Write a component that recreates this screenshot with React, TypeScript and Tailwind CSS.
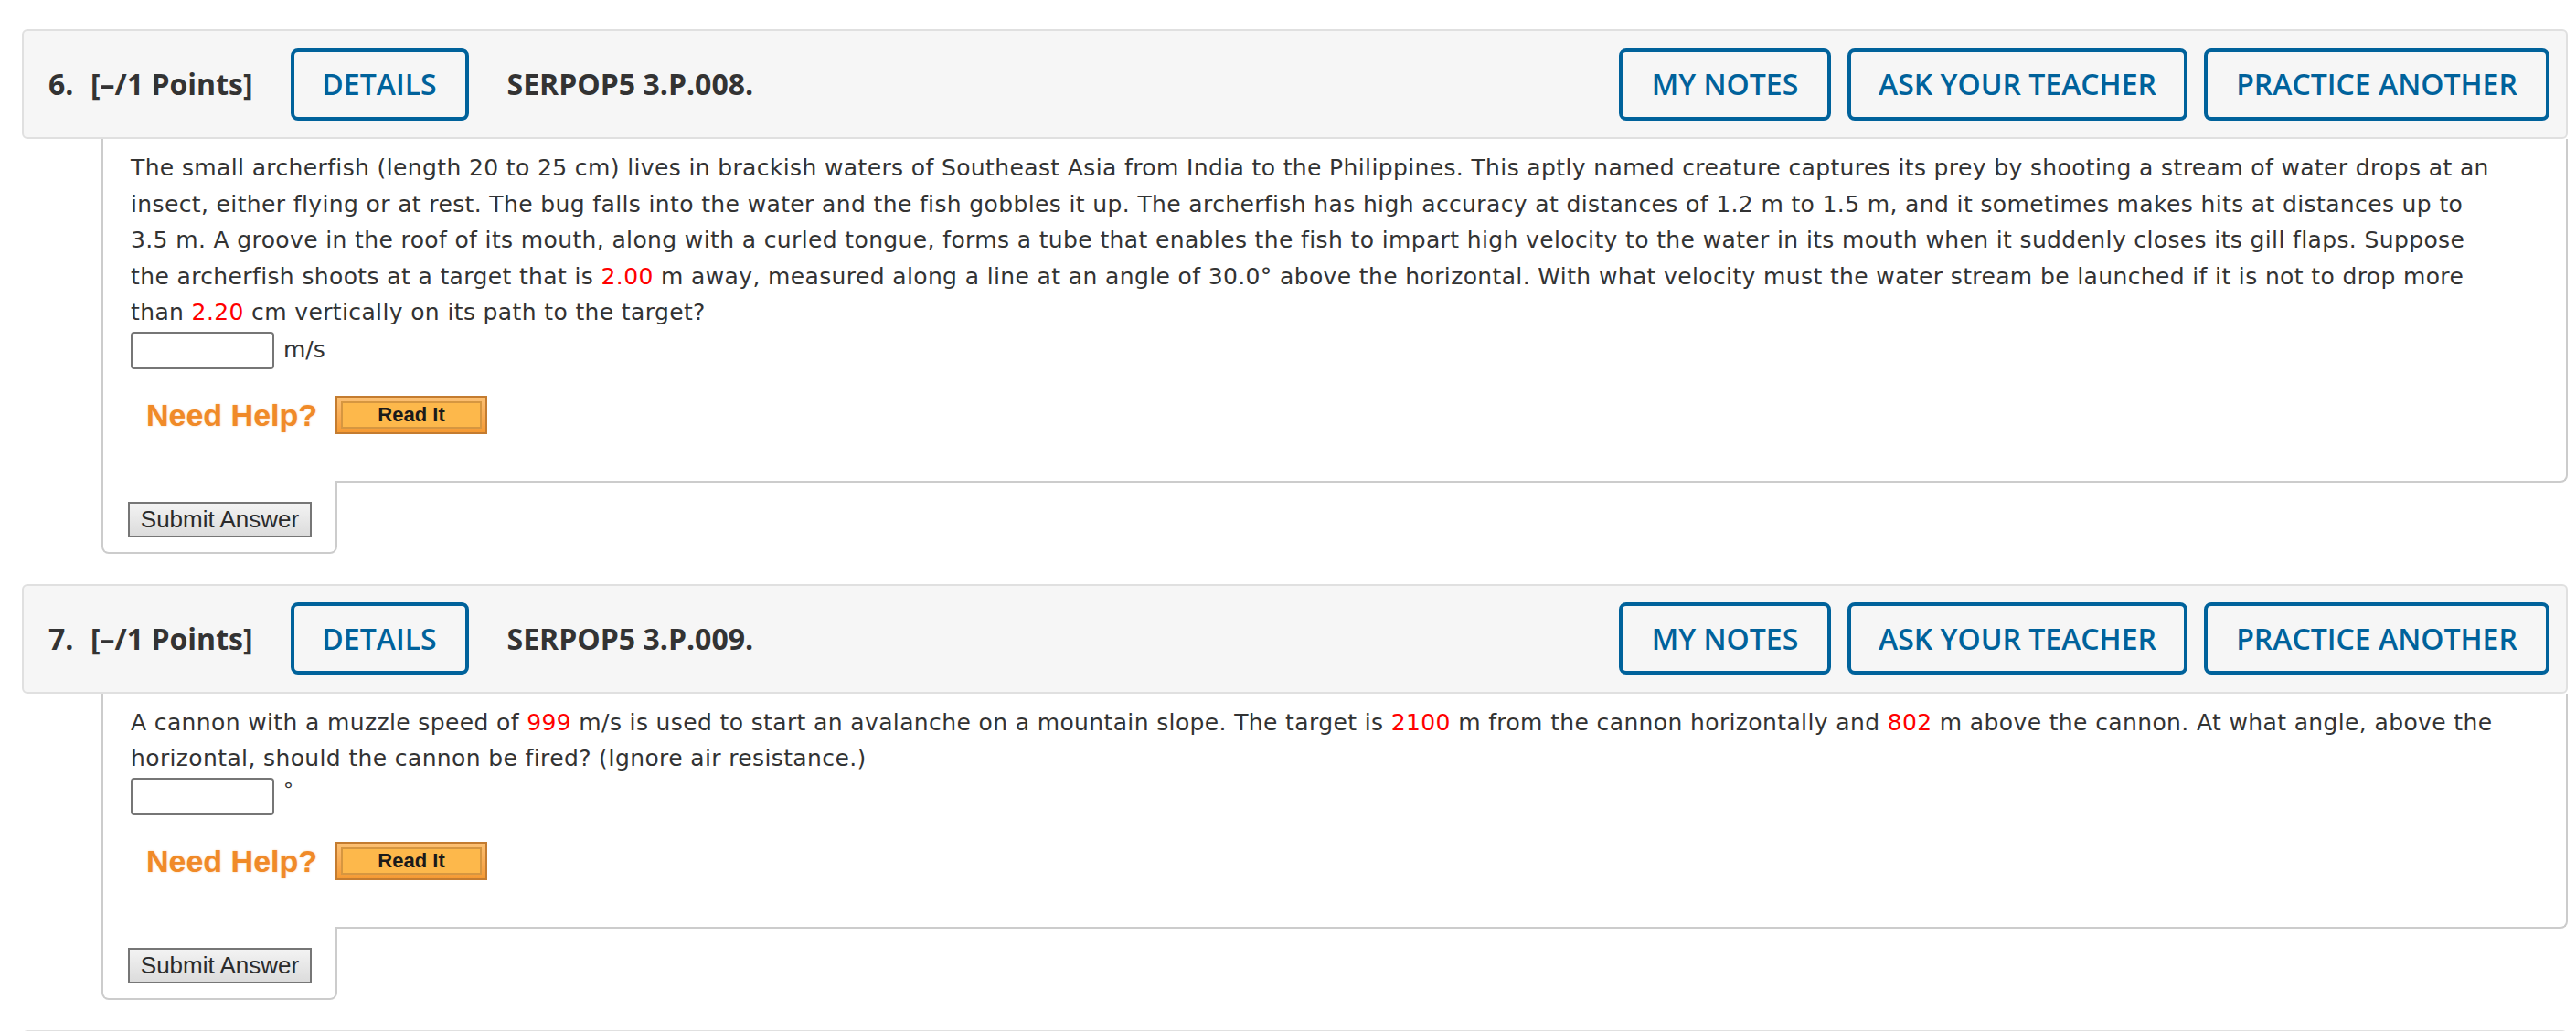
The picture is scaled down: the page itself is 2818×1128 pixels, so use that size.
import React from "react";

function HBtn({ label, cls }: { label: string; cls: string }) {
  return (
    <div
      className={
        "flex h-[79px] items-center justify-center rounded-[8px] border-[4px] border-[#00629b] bg-[#f6f6f6] font-['Open_Sans',sans-serif] text-[32px] font-semibold text-[#00629b] " +
        cls
      }
    >
      {label}
    </div>
  );
}

function Header({ num, code }: { num: string; code: string }) {
  return (
    <div className="flex h-[120px] items-center rounded-[6px] border-2 border-[#e0e0e0] bg-[#f6f6f6] pl-[27px] pr-[18px] font-['Open_Sans',sans-serif] text-[#333]">
      <span className="w-[46px] text-[32px] font-bold">{num}</span>
      <span className="text-[32px] font-bold">[–/1 Points]</span>
      <HBtn label="DETAILS" cls="ml-[41px] w-[195px]" />
      <span className="ml-[42px] text-[32px] font-bold">{code}</span>
      <div className="ml-auto flex gap-[18px]">
        <HBtn label="MY NOTES" cls="w-[232px]" />
        <HBtn label="ASK YOUR TEACHER" cls="w-[372px]" />
        <HBtn label="PRACTICE ANOTHER" cls="w-[378px]" />
      </div>
    </div>
  );
}

function Red({ children }: { children: React.ReactNode }) {
  return <span className="text-[#ff0000]">{children}</span>;
}

function NeedHelp() {
  return (
    <div className="ml-[17px] mt-[25px] flex items-center">
      <span
        className="font-['Liberation_Sans',Arial,sans-serif] text-[34px] font-bold text-[#f08a28]"
        style={{ textShadow: "0 0 2px rgba(240,138,40,0.45)" }}
      >
        Need Help?
      </span>
      <div className="ml-[20px] h-[42px] w-[166px] border-2 border-[#c47c30] bg-gradient-to-b from-[#fcc073] to-[#f59a32] p-[4px]">
        <div className="flex h-full w-full items-center justify-center border-2 border-[#d69640] bg-[#fdb84b] font-['Liberation_Sans',Arial,sans-serif] text-[22px] font-bold leading-none text-[#1a1a1a]">
          Read It
        </div>
      </div>
    </div>
  );
}

function Question({
  num,
  code,
  lines,
  unit,
  degree,
}: {
  num: string;
  code: string;
  lines: React.ReactNode[];
  unit: string;
  degree?: boolean;
}) {
  return (
    <div>
      <Header num={num} code={code} />
      <div className="ml-[87px] mr-0">
        <div className="rounded-br-[8px] border-x-2 border-b-2 border-[#cccccc] bg-white pb-[46px] pl-[30px] pr-[20px] pt-[12px]">
          <div className="font-['DejaVu_Sans',Verdana,sans-serif] text-[25px] leading-[39.5px] tracking-[0.37px] text-[#333]">
            {lines.map((l, i) => (
              <div key={i} className="whitespace-nowrap">
                {l}
              </div>
            ))}
          </div>
          <div className="mt-[1px] flex items-center">
            <div className="h-[41px] w-[157px] rounded-[4px] border-2 border-[#767676] bg-white" />
            {degree ? (
              <span className="-mt-[14px] ml-[10px] font-['DejaVu_Sans',sans-serif] text-[22px] text-[#333]">°</span>
            ) : (
              <span className="ml-[10px] font-['DejaVu_Sans',sans-serif] text-[25px] text-[#333]">{unit}</span>
            )}
          </div>
          <NeedHelp />
        </div>
        <div className="relative -mt-[2px] w-[258px] rounded-b-[8px] border-x-2 border-b-2 border-[#cccccc] bg-white pb-[16px] pl-[27px] pt-[23px]">
          <div className="flex h-[39px] w-[201px] items-center justify-center border-2 border-[#767676] bg-gradient-to-b from-[#f3f3f3] to-[#dcdcdc] font-['Liberation_Sans',Arial,sans-serif] text-[26px] text-[#2b2b2b]">
            Submit Answer
          </div>
        </div>
      </div>
    </div>
  );
}

export default function App() {
  return (
    <div className="min-h-screen bg-white pl-[24px] pr-[9px] pt-[32px]">
      <Question
        num="6."
        code="SERPOP5 3.P.008."
        unit="m/s"
        lines={[
          "The small archerfish (length 20 to 25 cm) lives in brackish waters of Southeast Asia from India to the Philippines. This aptly named creature captures its prey by shooting a stream of water drops at an",
          "insect, either flying or at rest. The bug falls into the water and the fish gobbles it up. The archerfish has high accuracy at distances of 1.2 m to 1.5 m, and it sometimes makes hits at distances up to",
          "3.5 m. A groove in the roof of its mouth, along with a curled tongue, forms a tube that enables the fish to impart high velocity to the water in its mouth when it suddenly closes its gill flaps. Suppose",
          <>
            the archerfish shoots at a target that is <Red>2.00</Red> m away, measured along a line at an angle of 30.0° above the horizontal. With what velocity must the water stream be launched if it is not to drop more
          </>,
          <>
            than <Red>2.20</Red> cm vertically on its path to the target?
          </>,
        ]}
      />
      <div className="h-[33px]" />
      <Question
        num="7."
        code="SERPOP5 3.P.009."
        unit=""
        degree
        lines={[
          <>
            A cannon with a muzzle speed of <Red>999</Red> m/s is used to start an avalanche on a mountain slope. The target is <Red>2100</Red> m from the cannon horizontally and <Red>802</Red> m above the cannon. At what angle, above the
          </>,
          "horizontal, should the cannon be fired? (Ignore air resistance.)",
        ]}
      />
      <div className="h-[33px]" />
      <div className="h-[120px] rounded-[6px] border-2 border-[#e0e0e0] bg-[#f6f6f6]" />
    </div>
  );
}
